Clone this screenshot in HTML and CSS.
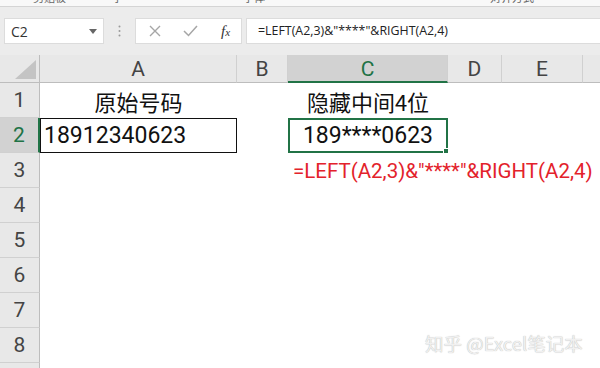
FILE: index.html
```html
<!DOCTYPE html>
<html>
<head>
<meta charset="utf-8">
<link rel="stylesheet" href="styles.css">
</head>
<body>
<div class="app">
  <div class="ribbon-strip">
    <span class="rlabel l1">剪贴板</span>
    <span class="rlabel l2">字</span>
    <span class="rlabel l3">字体</span>
    <span class="rlabel l4">对齐方式</span>
  </div>
  <div class="fbar">
    <div class="namebox">
      <span class="nb-text">C2</span>
      <svg class="nb-arrow" width="8" height="5" viewBox="0 0 8 5"><path d="M0 0 H8 L4 5 Z" fill="#666"/></svg>
    </div>
    <div class="dots">
      <svg width="3" height="12" viewBox="0 0 3 12"><circle cx="1.5" cy="1.5" r="1" fill="#999"/><circle cx="1.5" cy="6" r="1" fill="#999"/><circle cx="1.5" cy="10.5" r="1" fill="#999"/></svg>
    </div>
    <div class="fxbox">
      <svg class="ico" width="14" height="14" viewBox="0 0 14 14"><path d="M2 2 L12 12 M12 2 L2 12" stroke="#a6a6a6" stroke-width="1.4" fill="none"/></svg>
      <svg class="ico" width="15" height="12" viewBox="0 0 15 12"><path d="M1 6 L5.5 10.5 L14 1" stroke="#a6a6a6" stroke-width="1.5" fill="none"/></svg>
      <span class="fx">f<span class="fxx">x</span></span>
    </div>
    <div class="finput">=LEFT(A2,3)&amp;"****"&amp;RIGHT(A2,4)</div>
  </div>
  <div class="sheet">
    <div class="corner"><svg width="21" height="19" viewBox="0 0 21 19"><path d="M21 0 V19 H0 Z" fill="#c4c4c4"/></svg></div>
    <div class="ch">A</div>
    <div class="ch">B</div>
    <div class="ch sel">C</div>
    <div class="ch">D</div>
    <div class="ch">E</div>
    <div class="ch last"></div>

    <div class="rh">1</div>
    <div class="cell center cjk">原始号码</div>
    <div class="cell"></div>
    <div class="cell center cjk">隐藏中间4位</div>
    <div class="cell"></div>
    <div class="cell"></div>
    <div class="cell"></div>

    <div class="rh rsel">2</div>
    <div class="cell num boxed">18912340623</div>
    <div class="cell"></div>
    <div class="cell center num active">189****0623<span class="handle"></span></div>
    <div class="cell"></div>
    <div class="cell"></div>
    <div class="cell"></div>

    <div class="rh">3</div>
    <div class="cell"></div>
    <div class="cell"></div>
    <div class="cell formula">=LEFT(A2,3)&amp;"****"&amp;RIGHT(A2,4)</div>
    <div class="cell"></div>
    <div class="cell"></div>
    <div class="cell"></div>

    <div class="rh">4</div><div class="cell"></div><div class="cell"></div><div class="cell"></div><div class="cell"></div><div class="cell"></div><div class="cell"></div>
    <div class="rh">5</div><div class="cell"></div><div class="cell"></div><div class="cell"></div><div class="cell"></div><div class="cell"></div><div class="cell"></div>
    <div class="rh">6</div><div class="cell"></div><div class="cell"></div><div class="cell"></div><div class="cell"></div><div class="cell"></div><div class="cell"></div>
    <div class="rh">7</div><div class="cell"></div><div class="cell"></div><div class="cell"></div><div class="cell"></div><div class="cell"></div><div class="cell"></div>
    <div class="rh">8</div><div class="cell"></div><div class="cell"></div><div class="cell"></div><div class="cell"></div><div class="cell"></div><div class="cell"></div>
    <div class="rh">9</div><div class="cell"></div><div class="cell"></div><div class="cell"></div><div class="cell"></div><div class="cell"></div><div class="cell"></div>
  </div>
  <div class="watermark">知乎 @Excel笔记本</div>
</div>
</body>
</html>
```
FILE: styles.css
```css
* { box-sizing: border-box; }
html, body { margin: 0; padding: 0; }
body { width: 600px; height: 368px; overflow: hidden; background: #fff; font-family: Roboto, "Noto Sans CJK SC", sans-serif; }
.app { position: relative; width: 600px; height: 368px; overflow: hidden; }

.ribbon-strip { height: 7px; background: #f8f8f8; border-bottom: 1px solid #d4d4d4; position: relative; overflow: hidden; }
.rlabel { position: absolute; top: -9px; font-size: 11px; line-height: 13px; color: #666; font-family: "Noto Sans CJK SC", sans-serif; }
.l1 { left: 33px; }
.l2 { left: 112px; }
.l3 { left: 243px; }
.l4 { left: 490px; }

.fbar { height: 48px; background: #ececec; display: flex; align-items: flex-start; padding-top: 11px; }
.namebox { margin-left: 4px; width: 100px; height: 26px; background: #fff; border: 1px solid #dcdcdc; display: flex; align-items: center; justify-content: space-between; padding: 0 6px 0 6px; }
.nb-text { font-size: 14px; color: #333; font-family: "Open Sans", sans-serif; }
.nb-arrow { margin-top: 1px; }
.dots { width: 31px; height: 26px; display: flex; align-items: center; justify-content: center; }
.fxbox { width: 107px; height: 26px; background: #fff; border: 1px solid #dcdcdc; display: flex; align-items: center; padding-left: 12px; gap: 21px; }
.fx { font-family: "Liberation Serif", serif; font-style: italic; font-size: 15px; color: #333; margin-left: 2px; }
.fxx { font-size: 11px; }
.finput { flex: 1; margin-left: 4px; height: 26px; background: #fff; border: 1px solid #dcdcdc; border-right: none; font-family: "Open Sans", sans-serif; font-size: 12.4px; color: #222; line-height: 24px; padding-left: 11px; white-space: nowrap; }

.sheet { display: grid; grid-template-columns: 40px 197px 51px 160px 54px 81px 1fr; grid-template-rows: 28px repeat(9, 35px); }
.corner { background: #e8e8e8; border-right: 1px solid #bdbdbd; border-bottom: 1px solid #bdbdbd; display: flex; align-items: flex-end; justify-content: flex-end; padding: 0 3px 3px 0; }
.ch { background: #e8e8e8; border-right: 1px solid #d0d0d0; border-bottom: 1px solid #bdbdbd; font-size: 21px; color: #444; display: flex; align-items: center; justify-content: center; padding-top: 1px; }
.ch.sel { background: #d2d2d2; border-bottom: 2px solid #217346; color: #217346; }
.ch.last { border-right: none; }
.rh { background: #e8e8e8; border-right: 1px solid #bdbdbd; border-bottom: 1px solid #d0d0d0; font-size: 21px; color: #444; display: flex; align-items: center; justify-content: center; }
.rh.rsel { background: #d2d2d2; color: #217346; border-right: 2px solid #217346; }

.cell { position: relative; background: #fff; display: flex; align-items: center; white-space: nowrap; font-size: 23px; color: #111; }
.center { justify-content: center; }
.cjk { font-family: "Noto Sans CJK SC", sans-serif; font-size: 22px; padding-top: 1px; }
.num { font-family: Roboto, sans-serif; }
.boxed { border: 1px solid #111; padding-left: 3px; }
.active { border: 2px solid #217346; }
.handle { position: absolute; right: -4px; bottom: -4px; width: 7px; height: 7px; background: #217346; border: 1px solid #fff; }
.formula { overflow: visible; color: #e3222b; font-size: 20.5px; padding-left: 5px; z-index: 1; }

.watermark { position: absolute; left: 425px; top: 330px; font-family: "Noto Sans CJK SC", sans-serif; font-size: 18.5px; color: #f0f0f0; text-shadow: 0 0 1px #a8a8a8; white-space: nowrap; }
```
